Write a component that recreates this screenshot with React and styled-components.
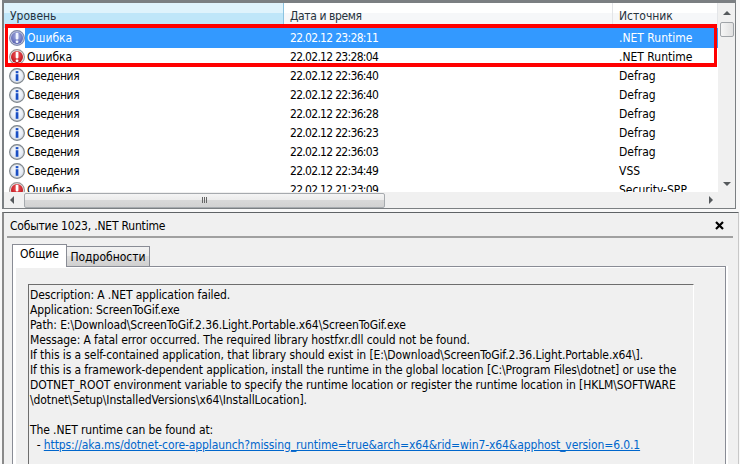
import React from "react";
import styled, { createGlobalStyle } from "styled-components";

const Global = createGlobalStyle`
  html, body { margin: 0; padding: 0; background: #f8f8f8; }
  body { width: 740px; height: 464px; overflow: hidden; font-family: "DejaVu Sans Condensed", "DejaVu Sans", sans-serif; font-size: 12px; color: #000; }
`;

const Page = styled.div`
  width: 740px;
  height: 464px;
  display: flex;
  flex-direction: column;
  overflow: hidden;
`;

const TopPane = styled.div`
  position: relative;
  flex: none;
  box-sizing: border-box;
  width: 734px;
  height: 209px;
  margin-left: 2px;
  border-style: solid;
  border-color: #7b7f82;
  border-width: 3px 1px 1px 2px;
  background: #fff;
  display: grid;
  grid-template-columns: 714px 17px;
  grid-template-rows: 189px 16px;
`;

const ListArea = styled.div`
  overflow: hidden;
  display: flex;
  flex-direction: column;
`;

const HeaderRow = styled.div`
  display: grid;
  grid-template-columns: 280px 329px 1fr;
  height: 25px;
  flex: none;
  background: linear-gradient(#ffffff 0, #ffffff 10px, #f6f7f9 10px, #f6f7f9 100%);
`;

const HeaderCell = styled.div`
  box-sizing: border-box;
  padding: 6px 0 0 6px;
  border-right: 1px solid ${(p) => (p.$active ? "#8cc3e0" : "#e3e5e8")};
  line-height: 15px;
  color: #26333d;
  letter-spacing: ${(p) => p.$spacing || 0}px;
  background: ${(p) => (p.$active ? "linear-gradient(#dff3fc 0, #dff3fc 10px, #bfe6f9 10px, #bfe6f9 100%)" : "transparent")};
`;

const Row = styled.div`
  display: grid;
  grid-template-columns: 280px 329px 1fr;
  height: 19px;
  flex: none;
  color: ${(p) => (p.$selected ? "#fff" : "#000")};
`;

const LevelCell = styled.div`
  display: flex;
  align-items: center;
  height: 100%;
  padding-left: 5px;
`;

const LevelText = styled.span`
  flex: 1;
  height: 100%;
  line-height: 20px;
  padding-left: 2px;
  letter-spacing: ${(p) => p.$spacing || 0}px;
  background: ${(p) => (p.$selected ? "#3399ff" : "transparent")};
`;

const Cell = styled.div`
  height: 100%;
  line-height: 20px;
  padding-left: 6px;
  letter-spacing: ${(p) => p.$spacing || 0}px;
  background: ${(p) => (p.$selected ? "#3399ff" : "transparent")};
  white-space: nowrap;
`;

const VScroll = styled.div`
  grid-row: 1 / 2;
  grid-column: 2;
  background: #f0f0f0;
  display: flex;
  flex-direction: column;
  align-items: center;
  justify-content: space-between;
  position: relative;
`;

const Arrow = styled.div`
  width: 0;
  height: 0;
  border-left: 4px solid transparent;
  border-right: 4px solid transparent;
  ${(p) => (p.$up ? "border-bottom: 4px solid #55595c; margin-top: 8px;" : "border-top: 4px solid #55595c; margin-bottom: 6px;")}
`;

const VThumb = styled.div`
  position: absolute;
  top: 19px;
  left: 2px;
  width: 14px;
  height: 15px;
  box-sizing: border-box;
  border: 1px solid #a0a4a8;
  border-radius: 2px;
  background: linear-gradient(90deg, #f6f6f6, #e0e0e0);
`;

const HScroll = styled.div`
  grid-row: 2;
  grid-column: 1;
  background: #f0f0f0;
  display: flex;
  align-items: center;
`;

const HArrow = styled.div`
  width: 0;
  height: 0;
  border-top: 4px solid transparent;
  border-bottom: 4px solid transparent;
  ${(p) => (p.$left ? "border-right: 4px solid #55595c; margin-left: 6px;" : "border-left: 4px solid #55595c; margin-left: auto; margin-right: 5px;")}
`;

const HThumb = styled.div`
  margin-left: 10px;
  width: 361px;
  height: 15px;
  box-sizing: border-box;
  border: 1px solid #a6aaae;
  border-radius: 2px;
  background: linear-gradient(#f4f4f4 0%, #ececec 45%, #d8d8d8 50%, #d2d2d2 100%);
  display: flex;
  align-items: center;
  justify-content: center;
  gap: 1px;
`;

const Grip = styled.i`
  display: block;
  width: 1px;
  height: 6px;
  background: #666;
`;

const Corner = styled.div`
  grid-row: 2;
  grid-column: 2;
  background: #f0f0f0;
`;

const Highlight = styled.div`
  position: absolute;
  left: 1px;
  top: 21px;
  width: 712px;
  height: 43px;
  box-sizing: border-box;
  border: 3px solid #ff0000;
  border-width: 4px 3px;
  pointer-events: none;
`;

const Detail = styled.div`
  flex: 1;
  min-height: 0;
  width: 737px;
  box-sizing: border-box;
  margin: 3px 0 0 2px;
  border-top: 1px solid #5f6366;
  border-left: 2px solid #8a8a8a;
  border-right: 1px solid #c8c8c8;
  background: #f0f0f0;
  display: flex;
  flex-direction: column;
`;

const TitleBar = styled.div`
  flex: none;
  box-sizing: border-box;
  height: 25px;
  margin: 0 5px 0 3px;
  padding: 2px 9px 0 3px;
  display: flex;
  align-items: center;
  justify-content: space-between;
  border-bottom: 2px solid #a0a0a0;
`;

const TitleText = styled.span`
  letter-spacing: -0.2px;
`;

const CloseIcon = styled.svg`
  width: 9px;
  height: 9px;
  display: block;
`;

const Tabs = styled.div`
  flex: none;
  display: flex;
  align-items: flex-end;
  margin: 6px 0 -1px 8px;
  height: 23px;
  position: relative;
  z-index: 1;
`;

const Tab = styled.div`
  box-sizing: border-box;
  height: ${(p) => (p.$active ? 23 : 21)}px;
  width: ${(p) => (p.$active ? 55 : 84)}px;
  border: 1px solid #898c95;
  margin-left: ${(p) => (p.$active ? 0 : -1)}px;
  text-align: center;
  line-height: ${(p) => (p.$active ? 19 : 21)}px;
  ${(p) =>
    p.$active
      ? "background: #fff; border-bottom: 0; position: relative; z-index: 1;"
      : "background: linear-gradient(#f2f2f2 0%, #ebebeb 45%, #dddddd 50%, #cfcfcf 100%);"}
`;

const TabBody = styled.div`
  flex: 1;
  min-height: 0;
  margin: 0 12px 0 8px;
  box-sizing: border-box;
  border: 1px solid #898c95;
  border-bottom: 0;
  padding: 17px 0 0 15px;
  background: #f0f0f0;
  box-shadow: inset 3px 1px 0 #fff, 2px 0 0 #fff;
`;

const MessageBox = styled.div`
  width: 666px;
  height: 200px;
  box-sizing: border-box;
  border-top: 1px solid #6d6d6d;
  border-left: 1px solid #6d6d6d;
  border-right: 1px solid #fff;
  padding: 3px 0 0 1px;
  line-height: 15px;
  letter-spacing: -0.1px;
`;

const Line = styled.div`
  height: 15px;
  white-space: pre;
`;

const Link = styled.a`
  color: #0066cc;
  text-decoration: underline;
`;

const iconColors = {
  sel: { hi: "#a3aee2", lo: "#5a62b0", ring: "#7f88aa", band: "#c4cbe6", mark: "#f2f5ff" },
  err: { hi: "#f4595e", lo: "#b80f16", ring: "#9c9494", band: "#ececec", mark: "#ffffff" },
  info: { hi: "#ffffff", lo: "#dde5f3", ring: "#7d858c", band: "#d4d8dc", mark: "#1a4fc4" },
};

const Icon = ({ kind }) => {
  const c = iconColors[kind];
  const id = "grad-" + kind;
  return (
    <svg width="16" height="16" viewBox="0 0 16 16" style={{ flex: "none" }}>
      <defs>
        <radialGradient id={id} cx="50%" cy="35%" r="65%">
          <stop offset="0%" stopColor={c.hi} />
          <stop offset="100%" stopColor={c.lo} />
        </radialGradient>
      </defs>
      <circle cx="8" cy="8" r="7.4" fill={c.band} stroke={c.ring} strokeWidth="1.1" />
      <circle cx="8" cy="8" r="6" fill={`url(#${id})`} />
      {kind === "info" ? (
        <>
          <rect x="6.7" y="3.1" width="2.7" height="2.2" fill={c.mark} />
          <rect x="6.7" y="6.2" width="2.7" height="6.6" fill={c.mark} />
        </>
      ) : (
        <>
          <rect x="6.7" y="2.8" width="2.7" height="6.6" rx="0.8" fill={c.mark} />
          <rect x="6.7" y="10.4" width="2.7" height="2.5" rx="0.8" fill={c.mark} />
        </>
      )}
    </svg>
  );
};

const rows = [
  ["sel", "Ошибка", "22.02.12 23:28:11", ".NET Runtime"],
  ["err", "Ошибка", "22.02.12 23:28:04", ".NET Runtime"],
  ["info", "Сведения", "22.02.12 22:36:40", "Defrag"],
  ["info", "Сведения", "22.02.12 22:36:40", "Defrag"],
  ["info", "Сведения", "22.02.12 22:36:28", "Defrag"],
  ["info", "Сведения", "22.02.12 22:36:23", "Defrag"],
  ["info", "Сведения", "22.02.12 22:36:03", "Defrag"],
  ["info", "Сведения", "22.02.12 22:34:49", "VSS"],
  ["err", "Ошибка", "22.02.12 21:23:09", "Security-SPP"],
];

const message = [
  "Description: A .NET application failed.",
  "Application: ScreenToGif.exe",
  "Path: E:\\Download\\ScreenToGif.2.36.Light.Portable.x64\\ScreenToGif.exe",
  "Message: A fatal error occurred. The required library hostfxr.dll could not be found.",
  "If this is a self-contained application, that library should exist in [E:\\Download\\ScreenToGif.2.36.Light.Portable.x64\\].",
  "If this is a framework-dependent application, install the runtime in the global location [C:\\Program Files\\dotnet] or use the",
  "DOTNET_ROOT environment variable to specify the runtime location or register the runtime location in [HKLM\\SOFTWARE",
  "\\dotnet\\Setup\\InstalledVersions\\x64\\InstallLocation].",
  " ",
  "The .NET runtime can be found at:",
];

const App = () => {
  return (
    <Page>
      <Global />
      <TopPane>
        <ListArea>
          <HeaderRow>
            <HeaderCell $active>Уровень</HeaderCell>
            <HeaderCell $spacing={-0.4}>Дата и время</HeaderCell>
            <HeaderCell>Источник</HeaderCell>
          </HeaderRow>
          {rows.map((r, i) => {
            const sel = r[0] === "sel";
            return (
              <Row key={i} $selected={sel}>
                <LevelCell>
                  <Icon kind={r[0]} />
                  <LevelText $selected={sel} $spacing={r[0] === "info" ? -0.35 : 0}>
                    {r[1]}
                  </LevelText>
                </LevelCell>
                <Cell $selected={sel} $spacing={-0.7}>{r[2]}</Cell>
                <Cell $selected={sel}>{r[3]}</Cell>
              </Row>
            );
          })}
        </ListArea>
        <VScroll>
          <Arrow $up />
          <VThumb />
          <Arrow />
        </VScroll>
        <HScroll>
          <HArrow $left />
          <HThumb>
            <Grip />
            <Grip />
            <Grip />
          </HThumb>
          <HArrow />
        </HScroll>
        <Corner />
        <Highlight />
      </TopPane>
      <Detail>
        <TitleBar>
          <TitleText>Событие 1023, .NET Runtime</TitleText>
          <CloseIcon viewBox="0 0 9 9">
            <path d="M1 1 L8 8 M8 1 L1 8" stroke="#000" strokeWidth="2.2" />
          </CloseIcon>
        </TitleBar>
        <Tabs>
          <Tab $active>Общие</Tab>
          <Tab>Подробности</Tab>
        </Tabs>
        <TabBody>
          <MessageBox>
            {message.map((m, i) => (
              <Line key={i}>{m}</Line>
            ))}
            <Line>
              {"  - "}
              <Link href="#">https://aka.ms/dotnet-core-applaunch?missing_runtime=true&arch=x64&rid=win7-x64&apphost_version=6.0.1</Link>
            </Line>
          </MessageBox>
        </TabBody>
      </Detail>
    </Page>
  );
};

export default App;
